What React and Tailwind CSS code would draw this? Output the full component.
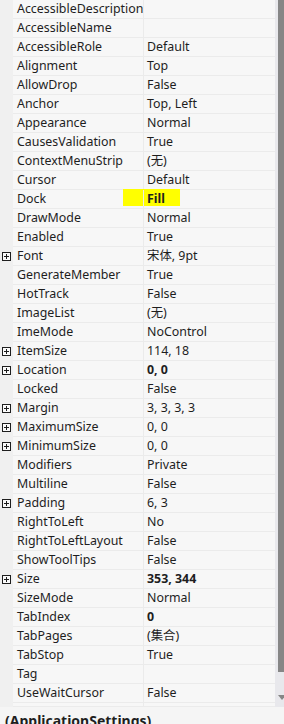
import React from 'react';

const props = [
  ['AccessibleDescription', ''],
  ['AccessibleName', ''],
  ['AccessibleRole', 'Default'],
  ['Alignment', 'Top'],
  ['AllowDrop', 'False'],
  ['Anchor', 'Top, Left'],
  ['Appearance', 'Normal'],
  ['CausesValidation', 'True'],
  ['ContextMenuStrip', '(无)'],
  ['Cursor', 'Default'],
  ['Dock', 'Fill', { bold: true, mark: true }],
  ['DrawMode', 'Normal'],
  ['Enabled', 'True'],
  ['Font', '宋体, 9pt', { expand: true }],
  ['GenerateMember', 'True'],
  ['HotTrack', 'False'],
  ['ImageList', '(无)'],
  ['ImeMode', 'NoControl'],
  ['ItemSize', '114, 18', { expand: true }],
  ['Location', '0, 0', { expand: true, bold: true }],
  ['Locked', 'False'],
  ['Margin', '3, 3, 3, 3', { expand: true }],
  ['MaximumSize', '0, 0', { expand: true }],
  ['MinimumSize', '0, 0', { expand: true }],
  ['Modifiers', 'Private'],
  ['Multiline', 'False'],
  ['Padding', '6, 3', { expand: true }],
  ['RightToLeft', 'No'],
  ['RightToLeftLayout', 'False'],
  ['ShowToolTips', 'False'],
  ['Size', '353, 344', { expand: true, bold: true }],
  ['SizeMode', 'Normal'],
  ['TabIndex', '0', { bold: true }],
  ['TabPages', '(集合)'],
  ['TabStop', 'True'],
  ['Tag', ''],
  ['UseWaitCursor', 'False'],
];

const PlusBox = () => (
  <svg width="9" height="9" viewBox="0 0 9 9" className="block">
    <rect x="0.5" y="0.5" width="8" height="8" fill="#fafafa" stroke="#1e1e1e" />
    <path d="M2 4.5h5M4.5 2v5" stroke="#1e1e1e" strokeWidth="1" />
  </svg>
);

const Row = ({ name, value, opts = {} }) => (
  <div className="relative flex h-[19px] shrink-0">
    <div className="flex w-[13px] shrink-0 items-center justify-center bg-[#f0f0f0]">
      {opts.expand && <PlusBox />}
    </div>
    <div className="flex w-[130px] shrink-0 items-center overflow-hidden whitespace-nowrap border-b border-[#ebebeb] pl-[4px]">
      {name}
    </div>
    {opts.mark && <div className="absolute left-[123px] top-[-1px] h-[17px] w-[57px] bg-[#ffff00]" />}
    <div className="relative flex flex-1 items-center overflow-hidden whitespace-nowrap border-b border-l border-[#ebebeb] pl-[3px]">
      <span className={opts.bold ? 'font-bold' : ''}>{value}</span>
    </div>
  </div>
);

export default function App() {
  return (
    <div
      className="flex h-[724px] w-[284px] flex-col overflow-hidden bg-[#f5f5f5] text-[12.4px] text-[#1e1e1e]"
      style={{ fontFamily: '"Noto Sans", "Noto Sans CJK SC", sans-serif' }}
    >
      <div className="flex h-[707px] shrink-0">
        <div className="flex flex-1 flex-col overflow-hidden bg-[#f7f7f7]">
          {props.map(([n, v, o]) => (
            <Row key={n} name={n} value={v} opts={o} />
          ))}
          <div className="flex h-[4px] shrink-0">
            <div className="w-[13px] bg-[#f0f0f0]" />
            <div className="w-[130px] border-b border-[#ebebeb]" />
            <div className="flex-1 border-b border-l border-[#ebebeb]" />
          </div>
        </div>
        <div className="relative flex w-[9px] shrink-0 bg-[#e8e8ec]">
          <div className="ml-[3px] h-[672px] w-[6px] bg-[#868686]" />
          <svg width="9" height="6" viewBox="0 0 9 6" className="absolute bottom-[6px] left-[3px]">
            <path d="M0 0h8L4 5z" fill="#868686" />
          </svg>
        </div>
      </div>
      <div className="whitespace-nowrap pl-[5px] pt-[7px] text-[14px] font-bold leading-none">(ApplicationSettings)</div>
    </div>
  );
}
